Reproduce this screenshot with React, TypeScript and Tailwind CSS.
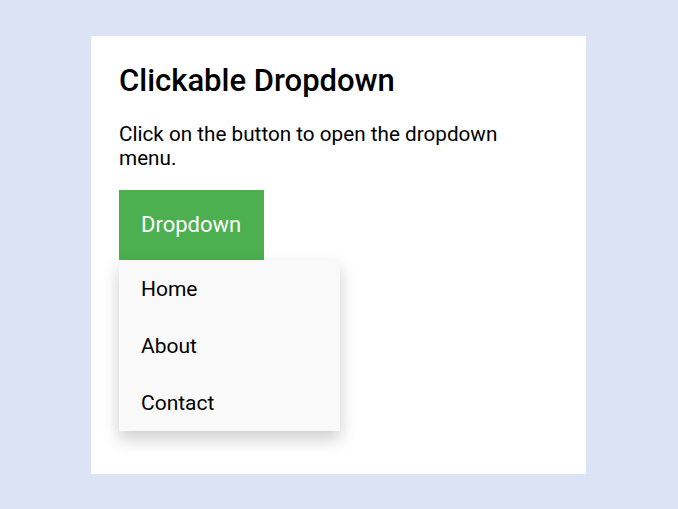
export default function App() {
  return (
    <div className="min-h-screen w-full flex items-center justify-center pr-[1px] bg-[#dce3f4]" style={{ fontFamily: 'Roboto, "Liberation Sans", sans-serif' }}>
      <div className="w-[495px] h-[438px] bg-white px-[28px] pt-[27px]">
        <h2 className="text-[31px] leading-[36px] font-medium text-black">Clickable Dropdown</h2>
        <p className="mt-[23px] text-[20.7px] leading-[24px] text-black">Click on the button to open the dropdown menu.</p>
        <div className="mt-[20px] relative">
          <button className="bg-[#4caf50] text-white text-[22px] leading-[26px] pl-[22px] w-[145px] h-[70px] flex items-center">Dropdown</button>
          <div className="absolute left-0 top-[70px] w-[221px] bg-[#f9f9f9] shadow-[0px_8px_16px_0px_rgba(0,0,0,0.2)]">
            {["Home", "About", "Contact"].map((t) => (
              <div key={t} className="pl-[22px] h-[57.33px] flex items-center pt-[1px] text-[21px] leading-[24px] text-black">{t}</div>
            ))}
          </div>
        </div>
      </div>
    </div>
  );
}
